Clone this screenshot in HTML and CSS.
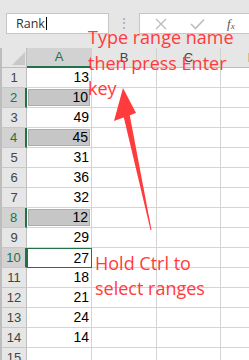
FILE: index.html
```html
<!DOCTYPE html>
<html>
<head>
<meta charset="utf-8">
<link rel="stylesheet" href="styles.css">
</head>
<body>
<div class="app">
  <div class="toolbar">
    <div class="namebox"><span class="name-text">Rank</span><span class="caret"></span></div>
    <div class="dots">⋮</div>
    <div class="formula">
      <svg class="ico ico-x" width="12" height="12" viewBox="0 0 12 12"><path d="M1 1 L11 11 M11 1 L1 11" stroke="#bdbdbd" stroke-width="1.4" fill="none"/></svg>
      <svg class="ico ico-check" width="15" height="12" viewBox="0 0 15 12"><path d="M1 6 L5.5 10.5 L14 1.5" stroke="#bdbdbd" stroke-width="1.6" fill="none"/></svg>
      <span class="fx">f<sub>x</sub></span>
    </div>
  </div>
  <div class="sheet">
    <div class="corner"><span class="tri"></span></div>
    <div class="colhead sel">A</div>
    <div class="colhead">B</div>
    <div class="colhead">C</div>
    <div class="colhead">D</div>

    <div class="rowhead">1</div><div class="cell num">13</div><div class="cell"></div><div class="cell"></div><div class="cell"></div>
    <div class="rowhead sel">2</div><div class="cell num"><span class="hl">10</span></div><div class="cell"></div><div class="cell"></div><div class="cell"></div>
    <div class="rowhead">3</div><div class="cell num">49</div><div class="cell"></div><div class="cell"></div><div class="cell"></div>
    <div class="rowhead sel">4</div><div class="cell num"><span class="hl">45</span></div><div class="cell"></div><div class="cell"></div><div class="cell"></div>
    <div class="rowhead">5</div><div class="cell num">31</div><div class="cell"></div><div class="cell"></div><div class="cell"></div>
    <div class="rowhead">6</div><div class="cell num">36</div><div class="cell"></div><div class="cell"></div><div class="cell"></div>
    <div class="rowhead">7</div><div class="cell num">32</div><div class="cell"></div><div class="cell"></div><div class="cell"></div>
    <div class="rowhead sel">8</div><div class="cell num"><span class="hl">12</span></div><div class="cell"></div><div class="cell"></div><div class="cell"></div>
    <div class="rowhead">9</div><div class="cell num">29</div><div class="cell"></div><div class="cell"></div><div class="cell"></div>
    <div class="rowhead sel">10</div><div class="cell num active">27</div><div class="cell"></div><div class="cell"></div><div class="cell"></div>
    <div class="rowhead">11</div><div class="cell num">18</div><div class="cell"></div><div class="cell"></div><div class="cell"></div>
    <div class="rowhead">12</div><div class="cell num">21</div><div class="cell"></div><div class="cell"></div><div class="cell"></div>
    <div class="rowhead">13</div><div class="cell num">24</div><div class="cell"></div><div class="cell"></div><div class="cell"></div>
    <div class="rowhead">14</div><div class="cell num">14</div><div class="cell"></div><div class="cell"></div><div class="cell"></div>
    <div class="rowhead">15</div><div class="cell num"></div><div class="cell"></div><div class="cell"></div><div class="cell"></div>
  </div>

  <div class="note note-top">Type range name<br>then press Enter<br>key</div>
  <div class="note note-bottom">Hold Ctrl to<br>select ranges</div>
  <svg class="arrow" width="249" height="360" viewBox="0 0 249 360">
    <polygon points="123,88 114,121 136,113" fill="#ff3b3b"/>
    <polygon points="123,114 129.5,114 151.5,230 150.5,230" fill="#ff3b3b"/>
  </svg>
</div>
</body>
</html>
```
FILE: styles.css
```css
html, body {
  margin: 0;
  padding: 0;
  background: #ffffff;
}
.app {
  position: relative;
  width: 249px;
  height: 360px;
  overflow: hidden;
  font-family: "Liberation Sans", Arial, sans-serif;
}
.toolbar {
  height: 48px;
  background: #e6e6e6;
  display: flex;
  align-items: flex-start;
  padding-top: 13px;
  box-sizing: border-box;
}
.namebox {
  margin-left: 6px;
  width: 103px;
  height: 21px;
  box-sizing: border-box;
  background: #fff;
  border: 1px solid #c6c6c6;
  display: flex;
  align-items: center;
  padding-left: 9px;
}
.name-text {
  font-family: "Open Sans", sans-serif;
  font-size: 12.5px;
  color: #333;
}
.caret {
  width: 1px;
  height: 13px;
  background: #000;
  margin-left: 1px;
}
.dots {
  width: 30px;
  text-align: center;
  color: #a8a8a8;
  font-size: 14px;
  line-height: 21px;
}
.formula {
  flex: 1;
  height: 21px;
  box-sizing: border-box;
  background: #fff;
  border: 1px solid #c6c6c6;
  border-right: none;
  display: flex;
  align-items: center;
  padding-left: 15px;
}
.ico-x { margin-right: 23px; }
.ico-check { margin-right: 22px; }
.fx {
  font-family: "Liberation Serif", serif;
  font-style: italic;
  font-size: 13px;
  color: #555;
}
.fx sub { font-size: 9px; vertical-align: -1px; }

.sheet {
  display: grid;
  grid-template-columns: 27px 65px 65px 64px 64px;
  grid-auto-rows: 20px;
  width: 285px;
}
.corner {
  background: #e6e6e6;
  border-left: 2px solid #bdbdbd;
  border-right: 1px solid #bdbdbd;
  border-bottom: 1px solid #bdbdbd;
  box-sizing: border-box;
  display: flex;
  justify-content: flex-end;
  align-items: flex-end;
  padding: 0 1px 2px 0;
}
.tri {
  width: 13px;
  height: 13px;
  background: #c8c8c8;
  clip-path: polygon(100% 0, 100% 100%, 0 100%);
}
.colhead {
  background: #e6e6e6;
  border-right: 1px solid #d0d0d0;
  border-bottom: 1px solid #bdbdbd;
  box-sizing: border-box;
  text-align: center;
  font-size: 13px;
  line-height: 19px;
  color: #444;
}
.colhead.sel {
  background: #d2d2d2;
  color: #217346;
  border-bottom: 2px solid #217346;
  line-height: 18px;
}
.rowhead {
  background: #e6e6e6;
  border-left: 2px solid #bdbdbd;
  border-right: 1px solid #bdbdbd;
  border-bottom: 1px solid #c8c8c8;
  box-sizing: border-box;
  text-align: center;
  font-size: 13px;
  line-height: 19px;
  color: #444;
}
.rowhead.sel {
  background: #d2d2d2;
  color: #217346;
  border-right: 2px solid #217346;
}
.cell {
  border-right: 1px solid #d4d4d4;
  border-bottom: 1px solid #d4d4d4;
  box-sizing: border-box;
}
.num {
  text-align: right;
  font-size: 14px;
  line-height: 19px;
  color: #000;
  padding-right: 2px;
  display: flex;
  justify-content: flex-end;
}
.hl {
  flex: 1;
  margin: 1px -1px 1px 1px;
  background: #c6c6c6;
  border: 1px solid #adadad;
  line-height: 15px;
  text-align: right;
  padding-right: 1px;
}
.active {
  border: 1px solid #217346;
}
.note {
  position: absolute;
  font-family: "Open Sans", sans-serif;
  font-size: 18px;
  color: #ff3b3b;
  white-space: nowrap;
}
.note-top {
  left: 88px;
  top: 25px;
  line-height: 25.5px;
}
.note-bottom {
  left: 95px;
  top: 251px;
  line-height: 25px;
}
.arrow {
  position: absolute;
  left: 0;
  top: 0;
}
```
